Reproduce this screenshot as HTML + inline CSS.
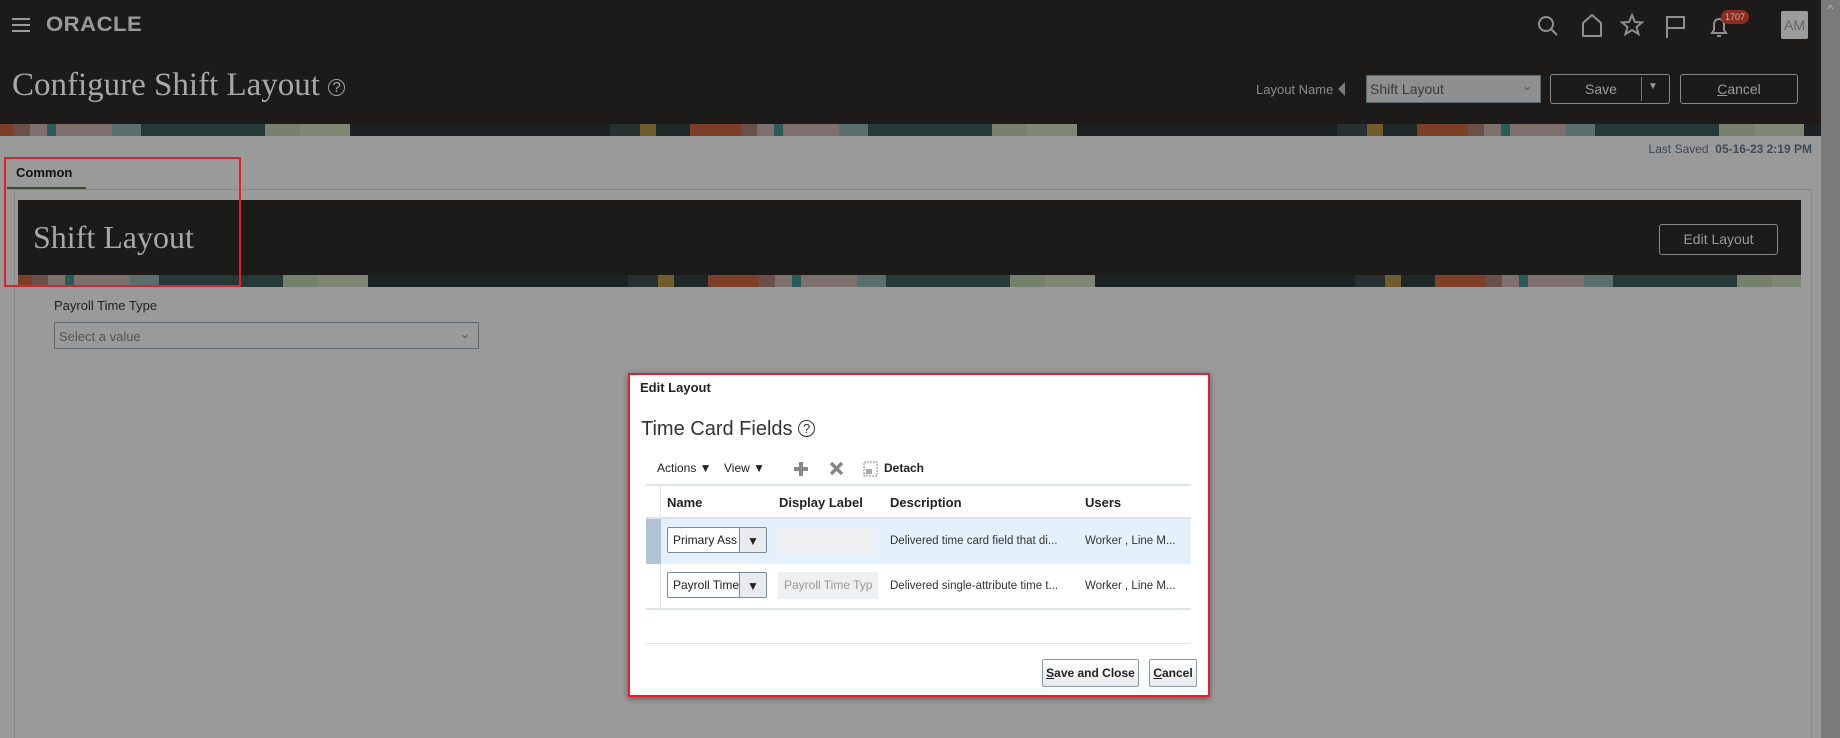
<!DOCTYPE html>
<html><head><meta charset="utf-8"><style>
*{margin:0;padding:0;box-sizing:border-box}
body{width:1840px;height:738px;overflow:hidden;background:#9a9a9a;font-family:"Liberation Sans",sans-serif;position:relative}
.abs{position:absolute}
.strip{background:repeating-linear-gradient(90deg,#7d3f25 0 14px,#6a5048 14px 30px,#7e706c 30px 47px,#285c58 47px 56px,#7d6f6c 56px 112px,#5a6e6e 112px 141px,#253a38 141px 265px,#75806d 265px 300px,#7e8674 300px 350px,#1a2322 350px 610px,#263030 610px 640px,#715c2b 640px 656px,#1e2827 656px 690px,#7d3f25 690px 727px)}
.hdr{left:0;top:0;width:1821px;height:124px;background:#1c1b19}
.scroll{left:1821px;top:0;width:19px;height:738px;background:#7b7b7b}
.ico{stroke:#8f8f8f;fill:none;stroke-width:2}
.dd{position:absolute;left:71px;top:0;width:27px;height:24px;background:#e9ecef;border-left:1px solid #7a8a9a;text-align:center;line-height:26px;font-size:12px}
</style></head><body>
<div class="abs hdr"></div>
<div class="abs strip" style="left:0;top:124px;width:1821px;height:12px"></div>
<div class="abs scroll"><div style="color:#bbb;font-size:12px;text-align:center;margin-top:2px">^</div></div>
<svg class="abs" style="left:11px;top:16px" width="22" height="18"><path d="M1 3h18M1 9h18M1 15h18" stroke="#9a9a9a" stroke-width="2"/></svg>
<div class="abs" style="left:46px;top:13px;font-size:21px;color:#9a9a9a;letter-spacing:0.5px;font-weight:bold;transform:scaleX(1.05);transform-origin:left">ORACLE</div>
<div class="abs" style="left:12px;top:67px;font-family:'Liberation Serif',serif;font-size:33px;color:#a8a8a8">Configure Shift Layout <span style="font-family:'Liberation Sans';font-size:15px;border:1.5px solid #a0a0a0;border-radius:50%;display:inline-block;width:17px;height:17px;line-height:15px;text-align:center;vertical-align:middle">?</span></div>
<svg class="abs" style="left:1535px;top:12px" width="290" height="30">
<circle cx="11" cy="12" r="7" class="ico"/><path d="M16 17l6 6" class="ico"/>
<path d="M48 24V11l9-8 9 8v13z" class="ico"/>
<path d="M97 3l3 7 7 .5-5.5 4.5 2 7-6.5-4-6.5 4 2-7L87 10.5 94 10z" class="ico"/>
<path d="M132 26V5h17v11h-17" class="ico"/>
<path d="M177 21h14l-2-3v-6a5 5 0 0 0-10 0v6zM182 24h4" class="ico"/>
</svg>
<div class="abs" style="left:1721px;top:10px;background:#8e2a20;color:#bbb;font-size:9px;border-radius:8px;padding:2px 4px">1707</div>
<div class="abs" style="left:1781px;top:11px;width:27px;height:28px;background:#9b9b9b;border-radius:2px;color:#666;font-size:14px;text-align:center;line-height:28px">AM</div>
<div class="abs" style="left:1256px;top:82px;font-size:13px;color:#8a8a8a">Layout Name</div>
<svg class="abs" style="left:1338px;top:82px" width="8" height="14"><path d="M7 0v14L0 7z" fill="#7a7a7a"/></svg>
<div class="abs" style="left:1366px;top:75px;width:175px;height:28px;background:#8f8f8f;border:1px solid #5a6670;font-size:14px;color:#3a3a3a;padding:5px 3px">Shift Layout<span style="position:absolute;right:8px;top:3px;font-size:12px;color:#555">&#8964;</span></div>
<div class="abs" style="left:1550px;top:74px;width:120px;height:30px;border:1px solid #888;border-radius:3px;color:#9a9a9a;font-size:14px;line-height:28px"><span style="position:absolute;left:34px">Save</span><span style="position:absolute;left:90px;top:2px;height:24px;border-left:1px solid #777"></span><span style="position:absolute;left:97px;top:-2px;font-size:10px">&#9660;</span></div>
<div class="abs" style="left:1680px;top:74px;width:118px;height:30px;border:1px solid #888;border-radius:3px;color:#9a9a9a;font-size:14px;line-height:28px;text-align:center"><u>C</u>ancel</div>
<div class="abs" style="right:28px;top:142px;font-size:12px;color:#3f4a55">Last Saved &nbsp;<b>05-16-23 2:19 PM</b></div>
<div class="abs" style="left:16px;top:165px;font-size:13px;font-weight:bold;color:#111">Common</div>
<div class="abs" style="left:7px;top:187px;width:79px;height:3px;background:#3e4a30"></div>
<div class="abs" style="left:5px;top:189px;width:1807px;height:1px;background:#868686"></div>
<div class="abs" style="left:14px;top:190px;width:1px;height:548px;background:#8a8a8a"></div>
<div class="abs" style="left:1811px;top:190px;width:1px;height:548px;background:#8a8a8a"></div>
<div class="abs" style="left:18px;top:200px;width:1783px;height:75px;background:#1c1b19"></div>
<div class="abs strip" style="left:18px;top:275px;width:1783px;height:12px"></div>
<div class="abs" style="left:33px;top:219px;font-family:'Liberation Serif',serif;font-size:32px;color:#a8a8a8">Shift Layout</div>
<div class="abs" style="left:1659px;top:224px;width:119px;height:31px;border:1px solid #888;border-radius:3px;color:#9a9a9a;font-size:14px;line-height:29px;text-align:center">Edit Layout</div>
<div class="abs" style="left:4px;top:157px;width:237px;height:130px;border:2px solid #e0202a"></div>
<div class="abs" style="left:54px;top:298px;font-size:13px;color:#222">Payroll Time Type</div>
<div class="abs" style="left:54px;top:322px;width:425px;height:27px;border:1px solid #5f6a72;font-size:13px;color:#555;padding:6px 4px">Select a value<span style="position:absolute;right:8px;top:4px;font-size:12px">&#8964;</span></div>

<div class="abs" style="left:628px;top:373px;width:582px;height:324px;background:#fff;border:2px solid #e0202a;box-shadow:0 2px 6px rgba(0,0,0,.4)">
<div class="abs" style="left:10px;top:5px;font-size:13px;font-weight:bold;color:#222">Edit Layout</div>
<div class="abs" style="left:11px;top:43px;font-size:20px;color:#333">Time Card Fields <span style="font-size:13px;border:1.5px solid #333;border-radius:50%;display:inline-block;width:17px;height:17px;line-height:15px;text-align:center;vertical-align:2px">?</span></div>
<div class="abs" style="left:27px;top:86px;font-size:12px;color:#222">Actions &#9660;</div>
<div class="abs" style="left:94px;top:86px;font-size:12px;color:#222">View &#9660;</div>
<svg class="abs" style="left:164px;top:86px" width="60" height="16"><path d="M7 1v14M0 8h14" stroke="#888" stroke-width="4"/><path d="M37 2l11 11M48 2L37 13" stroke="#888" stroke-width="3.5"/></svg>
<svg class="abs" style="left:233px;top:86px" width="16" height="16"><rect x="1" y="1" width="13" height="14" fill="none" stroke="#888" stroke-dasharray="2 1"/><rect x="3" y="8" width="6" height="5" fill="#aaa"/></svg>
<div class="abs" style="left:254px;top:86px;font-size:12px;font-weight:bold;color:#222">Detach</div>
<div class="abs" style="left:16px;top:109px;width:545px;height:2px;background:#dde3ea"></div>
<div class="abs" style="left:30px;top:111px;width:1px;height:123px;background:#e3e6ea"></div>
<div class="abs" style="left:37px;top:120px;font-size:13px;font-weight:bold;color:#222">Name</div>
<div class="abs" style="left:149px;top:120px;font-size:13px;font-weight:bold;color:#222">Display Label</div>
<div class="abs" style="left:260px;top:120px;font-size:13px;font-weight:bold;color:#222">Description</div>
<div class="abs" style="left:455px;top:120px;font-size:13px;font-weight:bold;color:#222">Users</div>
<div class="abs" style="left:16px;top:142px;width:545px;height:2px;background:#dde3ea"></div>
<div class="abs" style="left:31px;top:144px;width:530px;height:45px;background:#e4f0fc"></div>
<div class="abs" style="left:16px;top:144px;width:15px;height:45px;background:#b0c3d3"></div>
<div class="abs" style="left:16px;top:233px;width:545px;height:2px;background:#dde3ea"></div>
<div class="abs" style="left:37px;top:152px;width:100px;height:26px;border:1px solid #7a8a9a;border-radius:2px;background:#fcfdff;font-size:12px;color:#222;padding:5px 5px;overflow:hidden">Primary Ass<span class="dd">&#9660;</span></div>
<div class="abs" style="left:37px;top:197px;width:100px;height:26px;border:1px solid #7a8a9a;border-radius:2px;background:#fcfdff;font-size:12px;color:#222;padding:5px 5px;overflow:hidden">Payroll Time<span class="dd">&#9660;</span></div>
<div class="abs" style="left:148px;top:152px;width:100px;height:27px;background:#eef0f2"></div>
<div class="abs" style="left:148px;top:197px;width:100px;height:27px;background:#eef0f2;font-size:12px;color:#999;padding:6px 6px;white-space:nowrap;overflow:hidden">Payroll Time Typ</div>
<div class="abs" style="left:260px;top:160px;font-size:11.5px;color:#333">Delivered time card field that di...</div>
<div class="abs" style="left:260px;top:205px;font-size:11.5px;color:#333">Delivered single-attribute time t...</div>
<div class="abs" style="left:455px;top:160px;font-size:11.5px;color:#333">Worker , Line M...</div>
<div class="abs" style="left:455px;top:205px;font-size:11.5px;color:#333">Worker , Line M...</div>
<div class="abs" style="left:16px;top:268px;width:545px;height:1px;background:#dde3ea"></div>
<div class="abs" style="left:412px;top:284px;width:97px;height:28px;border:1px solid #8a98a8;border-radius:2px;background:linear-gradient(#fff,#e6e9ec);font-size:12px;font-weight:bold;color:#222;text-align:center;line-height:26px"><u>S</u>ave and Close</div>
<div class="abs" style="left:519px;top:284px;width:48px;height:28px;border:1px solid #8a98a8;border-radius:2px;background:linear-gradient(#fff,#e6e9ec);font-size:12px;font-weight:bold;color:#222;text-align:center;line-height:26px"><u>C</u>ancel</div>
</div>
</body></html>
